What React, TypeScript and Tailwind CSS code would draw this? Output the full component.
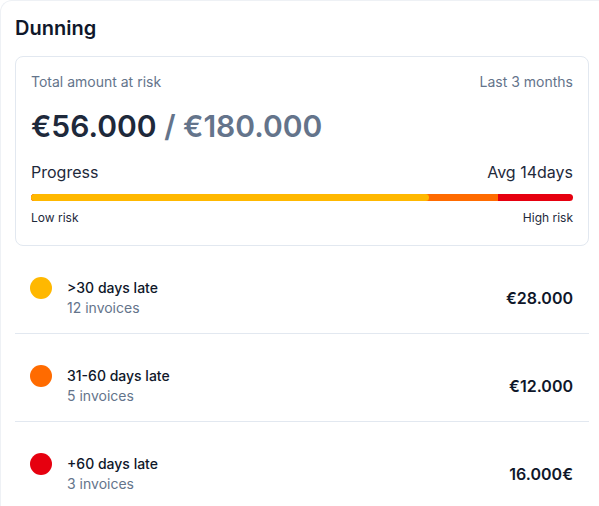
import React from 'react';

const buckets = [
  { label: '>30 days late', invoices: '12 invoices', amount: '€28.000', color: 'bg-[#ffb800]' },
  { label: '31-60 days late', invoices: '5 invoices', amount: '€12.000', color: 'bg-[#ff6b00]' },
  { label: '+60 days late', invoices: '3 invoices', amount: '16.000€', color: 'bg-[#e6000f]' },
];

export default function App() {
  return (
    <div className="min-h-[506px] bg-white font-['Inter',sans-serif] border-l border-t border-[#eef1f5] rounded-tl-xl pl-[14px] pr-[10px] pt-[15px]">
      <h2 className="text-[20px] leading-[24px] font-semibold text-[#0f172a]">Dunning</h2>

      <div className="mt-[16px] border border-[#e2e8f0] rounded-lg px-[15px] pt-[15px] pb-[19px]">
        <div className="flex justify-between text-[14px] leading-[20px] text-[#64748b]">
          <span>Total amount at risk</span>
          <span>Last 3 months</span>
        </div>
        <div className="mt-[16px] text-[30px] leading-[36px] font-semibold text-[#1e293b]">
          €56.000 <span className="text-[#64748b]">/ €180.000</span>
        </div>
        <div className="mt-[18px] flex justify-between text-[16px] leading-[20px] text-[#1e293b]">
          <span>Progress</span>
          <span>Avg 14days</span>
        </div>
        <div className="relative mt-[12px] h-[7px] rounded-full bg-[#e6000f]">
          <div className="absolute inset-y-0 left-0 w-[86.2%] rounded-l-full bg-[#ff6b00]" />
          <div className="absolute inset-y-0 left-0 w-[73.5%] rounded-full bg-[#ffb800]" />
        </div>
        <div className="mt-[9px] flex justify-between text-[12px] leading-[16px] text-[#1e293b]">
          <span>Low risk</span>
          <span>High risk</span>
        </div>
      </div>

      <div>
        {buckets.map((b, i) => (
          <div
            key={b.label}
            className={`flex items-center justify-between pl-[15px] pr-[16px] pt-[32px] pb-[15px] ${i < buckets.length - 1 ? 'border-b border-[#e2e8f0]' : ''}`}
          >
            <div className="flex items-start gap-[15px]">
              <div className={`w-[22px] h-[22px] rounded-full ${b.color} -mt-[1px]`} />
              <div>
                <div className="text-[14px] leading-[20px] font-medium text-[#0f172a]">{b.label}</div>
                <div className="text-[14px] leading-[20px] text-[#64748b]">{b.invoices}</div>
              </div>
            </div>
            <div className="text-[16px] leading-[20px] font-semibold text-[#0f172a]">{b.amount}</div>
          </div>
        ))}
      </div>
    </div>
  );
}
